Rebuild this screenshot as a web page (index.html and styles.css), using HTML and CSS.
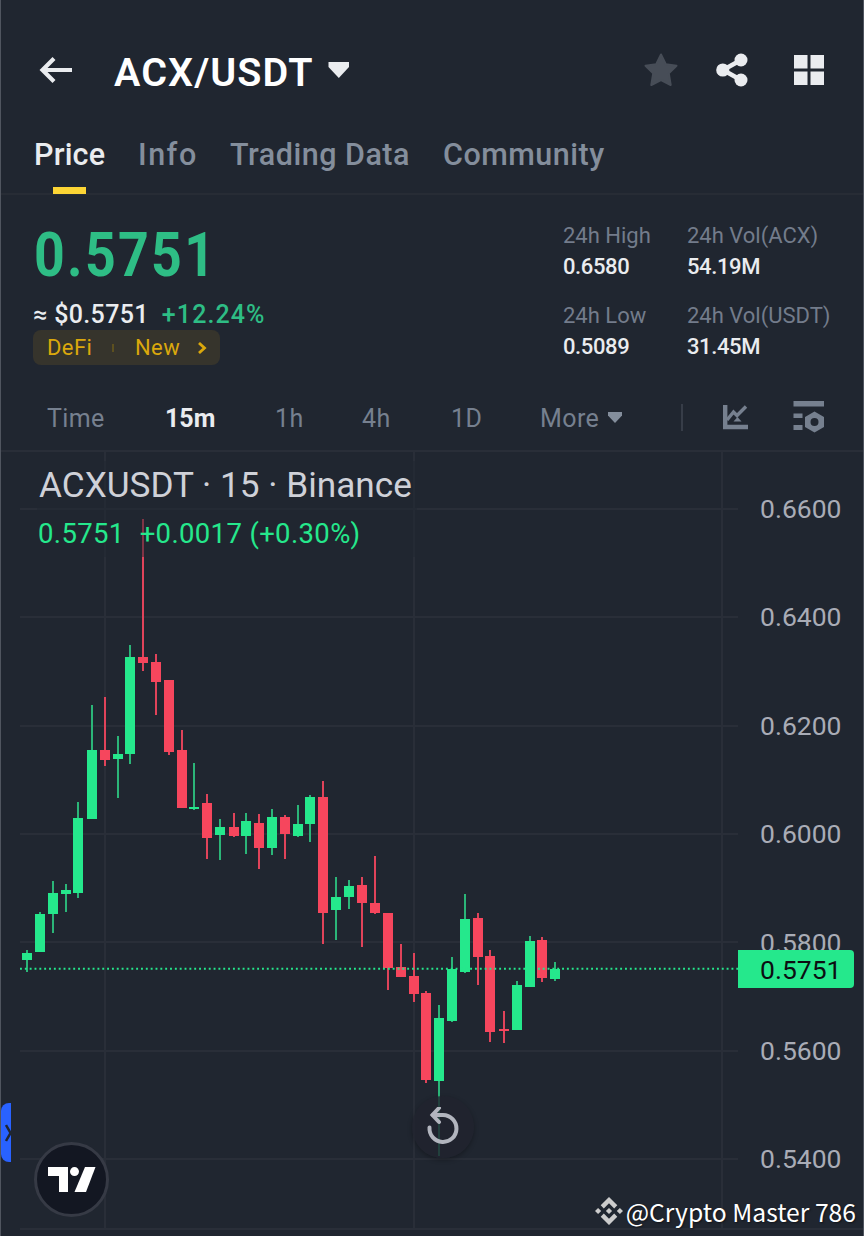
FILE: index.html
```html
<!DOCTYPE html>
<html lang="en">
<head>
  <meta charset="utf-8">
  <title>ACX/USDT</title>
  <link rel="stylesheet" href="styles.css">
</head>
<body>
  <div class="app">
    <header class="header">
      <svg class="back-icon" width="34" height="28" viewBox="0 0 34 28">
        <path d="M3 14H33M15 2.500L3.500 14L15 25.500" fill="none" stroke="#eaecef" stroke-width="4.200"/>
      </svg>
      <h1 class="pair-name">ACX/USDT</h1>
      <svg class="pair-arrow" width="22" height="16" viewBox="0 0 22 16">
        <path d="M.5 0H21V5L10.800 16L.5 5Z" fill="#eaecef"/>
      </svg>
      <div class="header-actions">
        <svg width="34" height="34" viewBox="0 0 34 34">
          <path d="M17 1.500L21.800 11.300L32.500 12.800L24.800 20.400L26.700 32L17 27L7.300 32L9.200 20.400L1.500 12.800L12.200 11.300Z" fill="#474d57" stroke="#474d57" stroke-width="2" stroke-linejoin="round"/>
        </svg>
        <svg width="32" height="34" viewBox="0 0 32 34">
          <path d="M25 7L7 17L25 27" fill="none" stroke="#eaecef" stroke-width="4.500"/>
          <circle cx="25" cy="7" r="6.500" fill="#eaecef"/>
          <circle cx="6.800" cy="17" r="6.600" fill="#eaecef"/>
          <circle cx="25" cy="27" r="6.500" fill="#eaecef"/>
        </svg>
        <svg width="30" height="30" viewBox="0 0 30 30">
          <path d="M0 0H13.500V13.500H0ZM16.500 0H30V13.500H16.500ZM0 16.500H13.500V30H0ZM16.500 16.500H30V30H16.500Z" fill="#eaecef"/>
        </svg>
      </div>
    </header>

    <nav class="tabs">
      <a class="tab tab-price active">Price</a>
      <a class="tab tab-info">Info</a>
      <a class="tab tab-trading">Trading Data</a>
      <a class="tab tab-community">Community</a>
    </nav>

    <section class="summary">
      <div class="summary-price">
        <div class="last-price"><span>0.5751</span></div>
        <div class="sub-price">
          <span class="fiat">≈ $0.5751</span>
          <span class="change">+12.24%</span>
        </div>
        <div class="tags">
          <span class="tag-defi">DeFi</span>
          <i class="tag-divider"></i>
          <span class="tag-new">New</span>
          <svg width="10" height="12" viewBox="0 0 10 12">
            <path d="M2 1L7.500 6L2 11" fill="none" stroke="#dba80c" stroke-width="2.800"/>
          </svg>
        </div>
      </div>
      <div class="stats">
        <div class="stat">
          <div class="stat-label">24h High</div>
          <div class="stat-value">0.6580</div>
        </div>
        <div class="stat">
          <div class="stat-label">24h Vol(ACX)</div>
          <div class="stat-value">54.19M</div>
        </div>
        <div class="stat">
          <div class="stat-label">24h Low</div>
          <div class="stat-value">0.5089</div>
        </div>
        <div class="stat">
          <div class="stat-label">24h Vol(USDT)</div>
          <div class="stat-value">31.45M</div>
        </div>
      </div>
    </section>

    <div class="intervals">
      <span class="wide">Time</span>
      <span class="selected">15m</span>
      <span>1h</span>
      <span>4h</span>
      <span>1D</span>
      <span class="more">More
        <svg width="14" height="11" viewBox="0 0 14 11"><path d="M0 0H14V3.500L7 11L0 3.500Z" fill="#848e9c"/></svg>
      </span>
      <i class="intervals-divider"></i>
      <svg width="25" height="26" viewBox="0 0 25 26">
        <path d="M2.200 1V23H25" fill="none" stroke="#76808f" stroke-width="4.400"/>
        <path d="M4 16L10.500 8L14 11.500L23 2.500" fill="none" stroke="#76808f" stroke-width="3.400"/>
        <path d="M14.500 13L18.500 17.500H10.500Z" fill="#76808f"/>
      </svg>
      <svg width="32" height="32" viewBox="0 0 32 32">
        <path d="M.5 0H31V5.500H.5ZM.5 12.500H9.500V17H.5ZM.5 24H9.500V29H.5Z" fill="#76808f"/>
        <path d="M21.500 10.500L31 16V26L21.500 31.500L12 26V16ZM21.500 17A4 4 0 1 0 21.500 25A4 4 0 1 0 21.500 17Z" fill="#76808f" fill-rule="evenodd"/>
      </svg>
    </div>

    <section class="chart">
      <svg class="plot" id="plot" width="862" height="785" viewBox="1 451 862 785"></svg>
      <div class="axis">
        <span>0.6600</span>
        <span>0.6400</span>
        <span>0.6200</span>
        <span>0.6000</span>
        <span>0.5800</span>
        <span>0.5600</span>
        <span>0.5400</span>
      </div>
      <div class="legend">
        <div class="legend-title">ACXUSDT · 15 · Binance</div>
        <div class="legend-values"><span>0.5751</span><span>+0.0017 (+0.30%)</span></div>
      </div>
      <div class="price-tag">0.5751</div>
      <div class="reset-button">
        <svg width="34" height="40" viewBox="0 0 34 40">
          <path d="M3.500 20.500A13.500 13.500 0 1 0 17 8H7" fill="none" stroke="#b2b5be" stroke-width="4" stroke-linecap="round"/>
          <path d="M13 1L6.500 8L13 15" fill="none" stroke="#b2b5be" stroke-width="4" stroke-linecap="round"/>
        </svg>
      </div>
      <div class="side-handle">
        <svg width="6" height="18" viewBox="0 0 6 18"><path d="M1 1L5.500 9L1 17" fill="none" stroke="#202630" stroke-width="2.500"/></svg>
      </div>
      <div class="tv-logo">
        <svg width="48" height="25" viewBox="0 0 48 25">
          <path d="M0 0H20V25H11V9H0Z" fill="#fff"/>
          <circle cx="26.500" cy="4.600" r="4.500" fill="#fff"/>
          <path d="M37 0H47.500L38 25H26.500Z" fill="#fff"/>
        </svg>
      </div>
      <div class="watermark">
        <svg width="28" height="28" viewBox="0 0 28 28">
          <path d="M14 0L22.300 8.300L19.200 11.400L14 6.200L8.800 11.400L5.700 8.300ZM14 28L22.300 19.700L19.200 16.600L14 21.800L8.800 16.600L5.700 19.700ZM3.100 10.900L6.200 14L3.100 17.100L0 14ZM24.900 10.900L28 14L24.900 17.100L21.800 14ZM14 10.900L17.100 14L14 17.100L10.900 14Z" fill="#ccc"/>
        </svg>
        <span>@Crypto Master 786</span>
      </div>
    </section>
  </div>

  <script>
    let plot = document.getElementById("plot");

    // x, high, body top, body bottom, low, up
    let candles = [
      [27, 950, 953, 960, 972, 1],
      [40, 912, 914, 952, 952, 1],
      [53, 881, 893, 914, 933, 1],
      [66, 884, 890, 894, 912, 1],
      [78, 802, 818, 893, 898, 1],
      [92, 705, 750, 819, 819, 1],
      [105, 697, 750, 760, 766, 0],
      [118, 736, 754, 759, 798, 1],
      [130, 645, 657, 754, 764, 1],
      [143, 519, 657, 663, 671, 0],
      [156, 654, 662, 682, 715, 0],
      [169, 680, 680, 752, 755, 0],
      [182, 730, 750, 808, 808, 0],
      [194, 763, 807, 809, 810, 1],
      [207, 794, 803, 838, 859, 0],
      [220, 819, 827, 835, 860, 1],
      [234, 813, 827, 836, 837, 0],
      [246, 813, 821, 836, 854, 1],
      [259, 814, 823, 848, 869, 0],
      [272, 809, 817, 848, 855, 1],
      [285, 815, 817, 834, 859, 0],
      [298, 805, 824, 836, 837, 1],
      [310, 795, 797, 824, 842, 1],
      [323, 781, 797, 913, 944, 0],
      [336, 877, 897, 910, 940, 1],
      [349, 880, 886, 897, 909, 1],
      [362, 877, 885, 903, 947, 0],
      [375, 856, 903, 913, 914, 0],
      [388, 913, 913, 968, 990, 0],
      [401, 944, 967, 977, 977, 0],
      [414, 953, 976, 994, 1002, 0],
      [426, 991, 993, 1080, 1083, 0],
      [439, 1005, 1018, 1081, 1156, 1],
      [452, 957, 969, 1021, 1022, 1],
      [465, 894, 919, 972, 973, 1],
      [478, 913, 918, 957, 985, 0],
      [490, 950, 956, 1032, 1042, 0],
      [504, 1011, 1029, 1031, 1043, 0],
      [517, 981, 985, 1030, 1030, 1],
      [530, 936, 941, 987, 987, 1],
      [542, 937, 940, 978, 982, 0],
      [555, 962, 969, 979, 981, 1]
    ];

    function addRect(x, y, width, height, className) {
      let rect = document.createElementNS("http://www.w3.org/2000/svg", "rect");
      rect.setAttribute("x", x);
      rect.setAttribute("y", y);
      rect.setAttribute("width", width);
      rect.setAttribute("height", height);
      rect.setAttribute("class", className);
      plot.appendChild(rect);
    }

    for (let y of [508, 616, 725, 833, 941, 1050, 1158]) {
      addRect(20, y, 718, 2, "grid-line");
    }
    for (let x of [104, 413, 721]) {
      addRect(x, 451, 2, 777, "grid-line");
    }
    addRect(20, 1228, 843, 2, "grid-line");

    for (let [x, high, top, bottom, low, up] of candles) {
      let side = up ? "up" : "down";
      addRect(x - 1, high, 2, low - high, "wick-" + side);
      addRect(x - 5, top, 10, bottom - top, "body-" + side);
    }

    let priceLine = document.createElementNS("http://www.w3.org/2000/svg", "path");
    priceLine.setAttribute("d", "M20 968.7H738");
    priceLine.setAttribute("class", "price-line");
    plot.appendChild(priceLine);
  </script>
</body>
</html>
```
FILE: styles.css
```css
* {
  box-sizing: border-box;
}

body {
  margin: 0;
  background-color: #202630;
  font-family: Roboto, "Liberation Sans", sans-serif;
  color: #eaecef;
}

svg {
  display: block;
  flex-shrink: 0;
}

.app {
  width: 864px;
  height: 1236px;
  overflow: hidden;
  border-left: 1px solid #50555f;
  border-right: 1px solid #50555f;
}

.header {
  display: flex;
  align-items: center;
  height: 140px;
  padding: 0 39px 0 38px;
}

.pair-name {
  margin: 5px 0 0 41px;
  width: 214px;
  font-size: 39.5px;
  font-weight: 600;
  letter-spacing: 1.1px;
  color: #fff;
}

.header-actions {
  display: flex;
  align-items: center;
  margin-left: auto;
  gap: 38px;
}

.header-actions svg:last-child {
  margin-left: 8px;
}

.tabs {
  display: flex;
  height: 55px;
  padding-left: 33px;
  border-bottom: 2px solid #272c35;
  font-size: 30.5px;
  font-weight: 500;
  line-height: 30px;
  color: #848e9c;
}

.tab {
  position: relative;
  white-space: nowrap;
  letter-spacing: 0.5px;
}

.tab-price {
  width: 104px;
  letter-spacing: 0.2px;
}

.tab-info {
  width: 92px;
  letter-spacing: 1.5px;
}

.tab-trading {
  width: 213px;
}

.active {
  color: #eaecef;
}

.active::after {
  content: "";
  position: absolute;
  left: 19px;
  bottom: -1px;
  width: 33px;
  height: 7px;
  background-color: #fcd535;
}

.summary {
  display: flex;
  height: 190px;
  padding: 26px 0 0 32px;
}

.summary-price {
  width: 530px;
}

.last-price {
  height: 68px;
  font-size: 61px;
  font-weight: 700;
  line-height: 68px;
  color: #2ebd85;
}

.last-price span {
  display: inline-block;
  margin-left: 1px;
  transform: scaleX(0.88);
  transform-origin: left;
  letter-spacing: 2.6px;
}

.sub-price {
  display: flex;
  gap: 13px;
  height: 41px;
  padding-top: 11px;
  font-size: 25px;
  font-weight: 500;
  line-height: 30px;
  letter-spacing: 0.35px;
  white-space: nowrap;
}

.change {
  letter-spacing: 1.1px;
  color: #2ebd85;
}

.tags {
  display: flex;
  align-items: center;
  width: 187px;
  height: 35px;
  padding-left: 14px;
  border-radius: 8px;
  background-color: #36342c;
  font-size: 22px;
  letter-spacing: 0.4px;
  color: #dba80c;
}

.tag-defi {
  width: 65px;
}

.tag-divider {
  width: 2px;
  height: 8px;
  margin-right: 21px;
  background-color: #5d501f;
}

.tag-new {
  width: 62px;
}

.stats {
  display: grid;
  grid-template-columns: 124px 150px;
  grid-auto-rows: 80px;
  font-size: 22px;
  white-space: nowrap;
}

.stat-label {
  line-height: 29px;
  color: #737c8b;
}

.stat-value {
  line-height: 34px;
  font-weight: 500;
  letter-spacing: -0.4px;
}

.intervals {
  display: grid;
  grid-template-columns: 118px 110px 87px 89px 89px 141px 42px 70px 32px;
  align-items: center;
  height: 67px;
  padding-left: 46px;
  border-bottom: 2px solid #292e38;
  font-size: 25px;
  letter-spacing: 0.4px;
  color: #76808f;
}

.intervals span {
  padding-top: 1px;
}

.intervals svg {
  margin-top: -2px;
}

.selected {
  font-weight: 700;
  letter-spacing: 0;
  color: #eaecef;
}

.more {
  display: flex;
  align-items: center;
  gap: 9px;
}

.intervals-divider {
  width: 2px;
  height: 27px;
  background-color: #373d48;
}

.chart {
  position: relative;
  display: flex;
  height: 784px;
}

.plot {
  position: absolute;
  left: 0;
  top: -1px;
}

.grid-line {
  fill: #292e38;
}

.wick-up {
  fill: #2bb578;
}

.wick-down {
  fill: #e0435a;
}

.body-up {
  fill: #25e88c;
}

.body-down {
  fill: #f6465d;
}

.price-line {
  fill: none;
  stroke: #25e88c;
  stroke-width: 2;
  stroke-dasharray: 1.9 2.94;
}

.axis {
  display: flex;
  flex-direction: column;
  margin-left: 759px;
  padding-top: 3px;
  font-size: 26.5px;
  line-height: 108.4px;
  color: #a9acb6;
}

.legend {
  position: absolute;
  left: 36px;
  top: 9px;
  width: 380px;
  height: 96px;
  padding-left: 2px;
  background-color: rgba(32, 38, 48, 0.5);
  white-space: nowrap;
}

.legend-title {
  font-size: 35.2px;
  line-height: 49px;
  color: #cfd1d8;
}

.legend-values {
  display: flex;
  gap: 15px;
  margin-left: -1px;
  font-size: 27.5px;
  line-height: 48px;
  letter-spacing: 0.35px;
  color: #25e88c;
}

.price-tag {
  position: absolute;
  left: 737px;
  top: 498px;
  width: 116px;
  height: 38px;
  padding-left: 22px;
  border-radius: 0 4px 4px 0;
  background-color: #25e88c;
  font-size: 26.5px;
  line-height: 39px;
  color: #0c0e12;
}

.reset-button {
  position: absolute;
  left: 411px;
  top: 644px;
  display: flex;
  align-items: center;
  justify-content: center;
  width: 62px;
  height: 62px;
  border-radius: 50%;
  background-color: rgba(32, 35, 46, 0.8);
  box-shadow: 0 2px 5px rgba(0, 0, 0, 0.3);
}

.side-handle {
  position: absolute;
  left: 0;
  top: 651px;
  display: flex;
  align-items: center;
  justify-content: flex-end;
  width: 10px;
  height: 59px;
  border-radius: 8px 0 0 8px;
  background-color: #2962ff;
}

.tv-logo {
  position: absolute;
  left: 33px;
  top: 690px;
  display: flex;
  align-items: center;
  justify-content: center;
  width: 75px;
  height: 75px;
  border: 3px solid #363a45;
  border-radius: 50%;
  background-color: #131722;
}

.watermark {
  position: absolute;
  right: 7px;
  bottom: 8px;
  display: flex;
  align-items: center;
  gap: 3px;
  font-family: "Noto Sans CJK SC", sans-serif;
  font-size: 24.7px;
  line-height: 34px;
  color: #fff;
  text-shadow: 1px 1px 2px rgba(0, 0, 0, 0.5);
  white-space: nowrap;
}
```
